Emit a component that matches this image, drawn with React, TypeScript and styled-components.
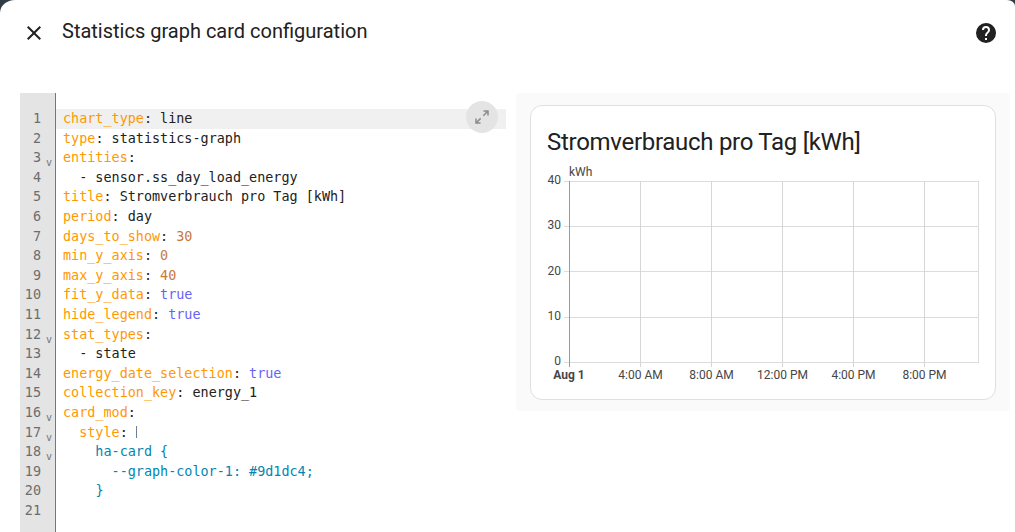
import React from "react";
import styled, { createGlobalStyle } from "styled-components";

const Global = createGlobalStyle`
  html, body { margin: 0; padding: 0; background: #2f3c46; }
  #root { width: 1015px; height: 532px; overflow: hidden; }
`;

const Dialog = styled.div`
  width: 1015px;
  height: 532px;
  background: #fff;
  border-radius: 15px 8px 0 0 / 13px 6px 0 0;
  overflow: hidden;
  font-family: Roboto, sans-serif;
`;

const Header = styled.header`
  height: 62px;
  display: flex;
  align-items: center;
  padding: 4px 17px 0 22px;
  box-sizing: border-box;
`;

const IconBox = styled.div`
  width: 24px;
  height: 24px;
  display: flex;
  color: #212121;
`;

const Title = styled.h1`
  flex: 1;
  margin: 0 0 5px 16px;
  font-size: 20px;
  font-weight: 400;
  line-height: 24px;
  color: #212121;
`;

const Body = styled.div`
  display: flex;
  gap: 10px;
  padding: 31px 5px 0 20px;
`;

const Editor = styled.div`
  position: relative;
  width: 486px;
  height: 439px;
  display: flex;
  flex: none;
`;

const Gutter = styled.div`
  width: 35px;
  flex: none;
  background: #e4e4e4;
  border-right: 1px solid #777;
  padding-top: 16px;
`;

const Code = styled.div`
  flex: 1;
  padding-top: 16px;
`;

const LineNo = styled.div`
  position: relative;
  height: 19.6px;
  font: 13.44px/19.6px "DejaVu Sans Mono", monospace;
  color: #6d6d6d;
  text-align: right;
  padding-right: 14px;
`;

const Fold = styled.span`
  position: absolute;
  right: 3px;
  top: 5px;
  font-size: 10px;
  color: #777;
`;

const Line = styled.div<{ $active?: boolean }>`
  height: 19.6px;
  padding-left: 7px;
  font: 13.44px/19.6px "DejaVu Sans Mono", monospace;
  white-space: pre;
  color: #212121;
  background: ${(p) => (p.$active ? "#f0f0f0" : "transparent")};
`;

const Key = styled.span`color: #ff9800;`;
const Atom = styled.span`color: #6464f5;`;
const Num = styled.span`color: #c77a3c;`;
const Block = styled.span`color: #0086b3;`;
const Cursor = styled.span`
  display: inline-block;
  width: 1px;
  height: 12px;
  vertical-align: -1px;
  background: #6f7f8c;
`;

const ExpandButton = styled.div`
  position: absolute;
  top: 8px;
  right: 8px;
  width: 32px;
  height: 32px;
  border-radius: 50%;
  background: #e4e4e4;
  display: flex;
  align-items: center;
  justify-content: center;
`;

const Preview = styled.section`
  width: 466px;
  height: 295px;
  padding: 12px 14px 11px 14px;
  background: #fafafa;
  border-radius: 4px;
  flex: none;
`;

const Card = styled.div`
  height: 293px;
  background: #fff;
  border: 1px solid #e0e0e0;
  border-radius: 12px;
  display: flex;
  flex-direction: column;
`;

const CardTitle = styled.h2`
  margin: 0;
  padding: 20px 16px 0;
  height: 53px;
  box-sizing: border-box;
  font-size: 24px;
  font-weight: 400;
  line-height: 32px;
  color: #212121;
  letter-spacing: -0.288px;
`;

const ChartSvg = styled.svg`
  display: block;
  font-family: Roboto, sans-serif;
  font-size: 12px;
  fill: #464646;
`;

const vs = [109, 180, 251, 322, 393];
const hs = [22, 67, 112, 158];

const Chart = () => (
  <ChartSvg width="466" height="238" viewBox="0 0 466 238">
    {hs.map((y) => (
      <line key={y} x1="33" x2="447.5" y1={y + 0.5} y2={y + 0.5} stroke="#dcdcdc" />
    ))}
    <line x1="33" x2="447.5" y1="203.5" y2="203.5" stroke="#dcdcdc" />
    {vs.map((x) => (
      <line key={x} x1={x + 0.5} x2={x + 0.5} y1="22" y2="208" stroke="#d6d6d6" />
    ))}
    <line x1="447.5" x2="447.5" y1="22" y2="204" stroke="#dcdcdc" />
    <line x1="38.5" x2="38.5" y1="22" y2="208" stroke="#9a9a9a" />
    <text x="38" y="17">kWh</text>
    {[["40", 25], ["30", 70], ["20", 116], ["10", 161]].map(([t, y]) => (
      <text key={t} x="30" y={Number(y)} textAnchor="end">{t}</text>
    ))}
    <text x="30" y="206" textAnchor="end">0</text>
    <text x="38" y="220" textAnchor="middle" fontWeight="700">Aug 1</text>
    {[["4:00 AM", 109.5], ["8:00 AM", 180.5], ["12:00 PM", 251.5], ["4:00 PM", 322.5], ["8:00 PM", 393.5]].map(([t, x]) => (
      <text key={t} x={x} y="220" textAnchor="middle">{t}</text>
    ))}
  </ChartSvg>
);

const lines: React.ReactNode[] = [
  <><Key>chart_type</Key>: line</>,
  <><Key>type</Key>: statistics-graph</>,
  <><Key>entities</Key>:</>,
  <>  - sensor.ss_day_load_energy</>,
  <><Key>title</Key>: Stromverbrauch pro Tag [kWh]</>,
  <><Key>period</Key>: day</>,
  <><Key>days_to_show</Key>: <Num>30</Num></>,
  <><Key>min_y_axis</Key>: <Num>0</Num></>,
  <><Key>max_y_axis</Key>: <Num>40</Num></>,
  <><Key>fit_y_data</Key>: <Atom>true</Atom></>,
  <><Key>hide_legend</Key>: <Atom>true</Atom></>,
  <><Key>stat_types</Key>:</>,
  <>  - state</>,
  <><Key>energy_date_selection</Key>: <Atom>true</Atom></>,
  <><Key>collection_key</Key>: energy_1</>,
  <><Key>card_mod</Key>:</>,
  <>  <Key>style</Key>: <Cursor /></>,
  <><Block>    ha-card {"{"}</Block></>,
  <><Block>      --graph-color-1: #9d1dc4;</Block></>,
  <><Block>    {"}"}</Block></>,
  <></>,
];

const folds = new Set([3, 12, 16, 17, 18]);

export default function App() {
  return (
    <>
      <Global />
      <Dialog>
        <Header>
          <IconBox>
            <svg width="24" height="24" viewBox="0 0 24 24" fill="currentColor">
              <path d="M19,6.41L17.59,5L12,10.59L6.41,5L5,6.41L10.59,12L5,17.59L6.41,19L12,13.41L17.59,19L19,17.59L13.41,12L19,6.41Z" />
            </svg>
          </IconBox>
          <Title>Statistics graph card configuration</Title>
          <IconBox>
            <svg width="24" height="24" viewBox="0 0 24 24" fill="currentColor">
              <path d="M15.07,11.25L14.17,12.17C13.45,12.89 13,13.5 13,15H11V14.5C11,13.39 11.45,12.39 12.17,11.67L13.41,10.41C13.78,10.05 14,9.55 14,9C14,7.89 13.1,7 12,7A2,2 0 0,0 10,9H8A4,4 0 0,1 12,5A4,4 0 0,1 16,9C16,9.88 15.64,10.67 15.07,11.25M13,19H11V17H13M12,2A10,10 0 0,0 2,12A10,10 0 0,0 12,22A10,10 0 0,0 22,12C22,6.47 17.5,2 12,2Z" />
            </svg>
          </IconBox>
        </Header>
        <Body>
          <Editor>
            <Gutter>
              {lines.map((_, i) => (
                <LineNo key={i}>
                  {i + 1}
                  {folds.has(i + 1) && <Fold>v</Fold>}
                </LineNo>
              ))}
            </Gutter>
            <Code>
              {lines.map((l, i) => (
                <Line key={i} $active={i === 0}>{l}</Line>
              ))}
            </Code>
            <ExpandButton>
              <svg width="18" height="18" viewBox="0 0 24 24" fill="#8a8a8a">
                <path d="M10,21V19H6.41L10.91,14.5L9.5,13.09L5,17.59V14H3V21H10M14.5,10.91L19,6.41V10H21V3H14V5H17.59L13.09,9.5L14.5,10.91Z" />
              </svg>
            </ExpandButton>
          </Editor>
          <Preview>
            <Card>
              <CardTitle>Stromverbrauch pro Tag [kWh]</CardTitle>
              <Chart />
            </Card>
          </Preview>
        </Body>
      </Dialog>
    </>
  );
}
